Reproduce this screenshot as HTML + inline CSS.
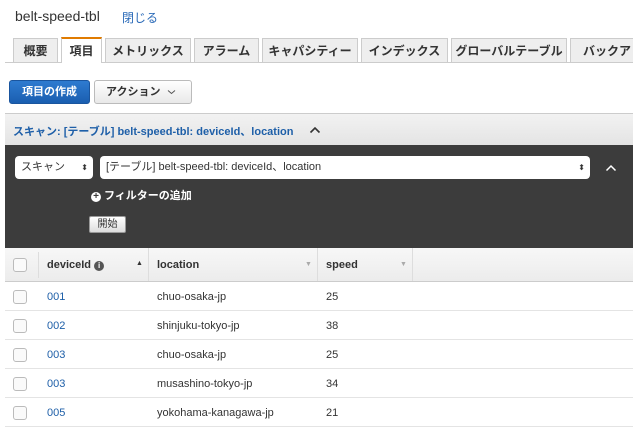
<!DOCTYPE html>
<html><head><meta charset="utf-8"><style>
*{box-sizing:border-box;margin:0;padding:0}
body{width:633px;height:448px;overflow:hidden;background:#fff;font-family:"Liberation Sans","Noto Sans CJK JP",sans-serif;font-size:12px;color:#333;position:relative}
.a{position:absolute}
.tab{position:absolute;top:38px;height:24px;border:1px solid #ccc;border-bottom:none;background:#eee;font-weight:bold;font-size:12px;text-align:center;line-height:25px;color:#333}
.tab.on{background:#fff;border-top:2px solid #e07b00;height:26px;top:37px}
.cb{position:absolute;width:14px;height:14px;border:1px solid #bbb;border-radius:3px;background:#fafafa}
.row{position:absolute;left:5px;width:628px;height:29px;border-bottom:1px solid #e4e4e4}
.row span{position:absolute;top:9px;font-size:11px}
.id{color:#1e5fa8}
</style></head><body>
<div class="a" style="left:15px;top:8px;font-size:14px;color:#333">belt-speed-tbl</div>
<div class="a" style="left:122px;top:9px;font-size:12px;color:#2a6ab8">閉じる</div>
<div class="a" style="left:5px;top:62px;width:628px;height:1px;background:#ccc"></div>
<div class="tab" style="left:13px;width:45px">概要</div>
<div class="tab on" style="left:61px;width:41px">項目</div>
<div class="tab" style="left:105px;width:86px">メトリックス</div>
<div class="tab" style="left:194px;width:65px">アラーム</div>
<div class="tab" style="left:262px;width:96px">キャパシティー</div>
<div class="tab" style="left:361px;width:87px">インデックス</div>
<div class="tab" style="left:451px;width:116px">グローバルテーブル</div>
<div class="tab" style="left:570px;width:70px;text-align:left;padding-left:12px">バックア</div>
<div class="a" style="left:9px;top:80px;width:81px;height:24px;background:linear-gradient(#2e7bd0,#1a5eb0);border:1px solid #1a559e;border-radius:3px;color:#fff;font-weight:bold;font-size:11px;text-align:center;line-height:22px">項目の作成</div>
<div class="a" style="left:94px;top:80px;width:98px;height:24px;background:linear-gradient(#fff,#e9e9e9);border:1px solid #bbb;border-radius:3px;font-weight:bold;font-size:11px;line-height:22px;padding-left:11px">アクション <svg width="9" height="6" style="margin-left:3px" viewBox="0 0 9 6"><path d="M1 1.5L4.5 4.5L8 1.5" fill="none" stroke="#555" stroke-width="1"/></svg></div>
<div class="a" style="left:5px;top:113px;width:628px;height:32px;background:linear-gradient(#f2f2f2,#e4e4e4);border-top:1px solid #ccc"></div>
<div class="a" style="left:13px;top:123px;font-size:11px;color:#1e5fa8;font-weight:bold">スキャン: [テーブル] belt-speed-tbl: deviceId、location</div>
<svg class="a" style="left:309px;top:126px" width="12" height="8" viewBox="0 0 12 8"><path d="M1.5 6.5L6 2L10.5 6.5" fill="none" stroke="#333" stroke-width="1.6"/></svg>
<div class="a" style="left:5px;top:145px;width:628px;height:103px;background:#3c3c3c"></div>
<div class="a" style="left:15px;top:156px;width:78px;height:23px;background:#fff;border-radius:4px;font-size:11px;line-height:23px;padding-left:6px">スキャン<span style="position:absolute;right:5px;font-size:8px">⬍</span></div>
<div class="a" style="left:100px;top:156px;width:490px;height:23px;background:#fff;border-radius:4px;font-size:11px;line-height:23px;padding-left:6px">[テーブル] belt-speed-tbl: deviceId、location<span style="position:absolute;right:5px;font-size:8px">⬍</span></div>
<svg class="a" style="left:605px;top:164px" width="12" height="8" viewBox="0 0 12 8"><path d="M1.5 6.5L6 2L10.5 6.5" fill="none" stroke="#fff" stroke-width="1.5"/></svg>
<div class="a" style="left:91px;top:187px;color:#fff;font-size:11px;font-weight:bold"><span style="display:inline-block;width:10px;height:10px;border-radius:50%;background:#fff;color:#3c3c3c;font-size:10px;line-height:10px;text-align:center;margin-right:3px">+</span>フィルターの追加</div>
<div class="a" style="left:89px;top:216px;width:37px;height:17px;background:linear-gradient(#fff,#ddd);border:1px solid #999;border-radius:2px;font-size:10px;text-align:center;line-height:15px">開始</div>
<div class="a" style="left:5px;top:248px;width:628px;height:34px;background:linear-gradient(#f7f7f7,#ececec);border-bottom:1px solid #ccc"></div>
<div class="cb" style="left:13px;top:258px"></div>
<div class="a" style="left:38px;top:252px;width:1px;height:26px;background:#ddd"></div>
<div class="a" style="left:148px;top:248px;width:1px;height:33px;background:#ddd"></div>
<div class="a" style="left:317px;top:248px;width:1px;height:33px;background:#ddd"></div>
<div class="a" style="left:412px;top:248px;width:1px;height:33px;background:#ddd"></div>
<div class="a" style="left:47px;top:259px;font-size:11px;font-weight:bold">deviceId <span style="display:inline-block;width:10px;height:10px;border-radius:50%;background:#555;color:#fff;font-size:8px;line-height:10px;text-align:center">i</span></div>
<div class="a" style="left:136px;top:260px;font-size:7px">▲</div>
<div class="a" style="left:157px;top:259px;font-size:11px;font-weight:bold">location</div>
<div class="a" style="left:305px;top:261px;font-size:7px;color:#aaa">▼</div>
<div class="a" style="left:326px;top:259px;font-size:11px;font-weight:bold">speed</div>
<div class="a" style="left:400px;top:261px;font-size:7px;color:#aaa">▼</div>
<div class="row" style="top:282px"><div class="cb" style="left:8px;top:8px"></div><span class="id" style="left:42px">001</span><span style="left:152px">chuo-osaka-jp</span><span style="left:321px">25</span></div>
<div class="row" style="top:311px"><div class="cb" style="left:8px;top:8px"></div><span class="id" style="left:42px">002</span><span style="left:152px">shinjuku-tokyo-jp</span><span style="left:321px">38</span></div>
<div class="row" style="top:340px"><div class="cb" style="left:8px;top:8px"></div><span class="id" style="left:42px">003</span><span style="left:152px">chuo-osaka-jp</span><span style="left:321px">25</span></div>
<div class="row" style="top:369px"><div class="cb" style="left:8px;top:8px"></div><span class="id" style="left:42px">003</span><span style="left:152px">musashino-tokyo-jp</span><span style="left:321px">34</span></div>
<div class="row" style="top:398px"><div class="cb" style="left:8px;top:8px"></div><span class="id" style="left:42px">005</span><span style="left:152px">yokohama-kanagawa-jp</span><span style="left:321px">21</span></div>
</body></html>
